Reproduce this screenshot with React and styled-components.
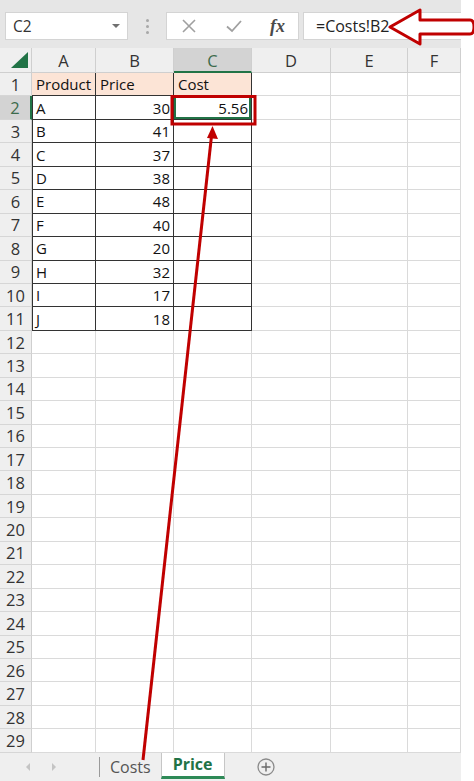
import React from "react";
import styled, { createGlobalStyle } from "styled-components";

const GlobalStyle = createGlobalStyle`
  html, body {
    margin: 0;
    padding: 0;
    background: #ffffff;
  }
  body {
    font-family: "Open Sans", "Noto Sans", sans-serif;
  }
`;

const COLS = [32, 64, 78, 78, 79, 77, 53];
const LETTERS = ["A", "B", "C", "D", "E", "F"];
const ROW_H = 23.45;

const products = ["A", "B", "C", "D", "E", "F", "G", "H", "I", "J"];
const prices = [30, 41, 37, 38, 48, 40, 20, 32, 17, 18];

const Page = styled.div`
  position: relative;
  width: 474px;
  height: 781px;
  overflow: hidden;
  background: #ffffff;
`;

const Sheet = styled.div`
  width: 461px;
  display: flex;
  flex-direction: column;
`;

const Toolbar = styled.div`
  height: 48px;
  background: #e6e6e6;
  display: flex;
  align-items: center;
  padding: 0 0 0 5px;
  box-sizing: border-box;
  padding-top: 4px;
`;

const NameBox = styled.div`
  width: 123px;
  height: 28px;
  background: #ffffff;
  box-sizing: border-box;
  border: 1px solid #d4d4d4;
  display: flex;
  align-items: center;
  justify-content: space-between;
  padding: 0 7px 0 7px;
  font-size: 15.5px;
  color: #333;
`;

const Caret = styled.span`
  width: 0;
  height: 0;
  border-left: 4px solid transparent;
  border-right: 4px solid transparent;
  border-top: 4px solid #707070;
`;

const Dots = styled.div`
  width: 38px;
  display: flex;
  flex-direction: column;
  align-items: center;
  gap: 3px;
  & span {
    width: 3px;
    height: 3px;
    background: #a8a8a8;
    border-radius: 50%;
  }
`;

const FxBox = styled.div`
  width: 133px;
  height: 28px;
  background: #ffffff;
  box-sizing: border-box;
  border: 1px solid #d4d4d4;
  display: flex;
  align-items: center;
  justify-content: space-between;
  padding: 0 13px 0 14px;
`;

const Fx = styled.span`
  font-family: "Liberation Serif", serif;
  font-style: italic;
  font-weight: 700;
  font-size: 18px;
  color: #4a4a4a;
`;

const FormulaBox = styled.div`
  flex: 1;
  margin-left: 4px;
  height: 28px;
  background: #ffffff;
  box-sizing: border-box;
  border: 1px solid #d4d4d4;
  border-right: none;
  display: flex;
  align-items: center;
  padding-left: 12px;
  font-size: 16px;
  color: #222;
`;

const Grid = styled.div`
  display: grid;
  grid-template-columns: ${COLS.map((c) => `${c}px`).join(" ")};
  grid-template-rows: 25px repeat(29, ${ROW_H}px);
`;

const Corner = styled.div`
  background: #efefef;
  border-right: 1px solid #cfcfcf;
  border-bottom: 1px solid #cfcfcf;
  box-sizing: border-box;
  display: flex;
  align-items: flex-end;
  justify-content: flex-end;
  padding: 0 3px 4px 0;
`;

const ColHead = styled.div`
  background: ${(p) => (p.$active ? "#d3d3d3" : "#efefef")};
  color: ${(p) => (p.$active ? "#3d6b4c" : "#333")};
  border-right: 1px solid #cfcfcf;
  border-bottom: ${(p) => (p.$active ? "2px solid #217346" : "1px solid #cfcfcf")};
  box-sizing: border-box;
  display: flex;
  align-items: center;
  justify-content: center;
  font-size: 16.5px;
  padding-top: 1px;
`;

const RowHead = styled.div`
  background: ${(p) => (p.$active ? "#d3d3d3" : "#efefef")};
  color: ${(p) => (p.$active ? "#3d6b4c" : "#333")};
  border-right: ${(p) => (p.$active ? "2px solid #217346" : "1px solid #cfcfcf")};
  border-bottom: 1px solid #d6d6d6;
  box-sizing: border-box;
  display: flex;
  align-items: center;
  justify-content: center;
  font-size: 16.5px;
`;

const Cell = styled.div`
  background: ${(p) => p.$fill || "#ffffff"};
  border-right: 1px solid ${(p) => (p.$dark ? "#333" : "#dadada")};
  border-bottom: 1px solid ${(p) => (p.$dark ? "#333" : "#dadada")};
  box-shadow: ${(p) =>
    p.$selected
      ? "inset 0 0 0 2px #217346"
      : p.$left
      ? "inset 1px 0 0 #333"
      : "none"};
  box-sizing: border-box;
  display: flex;
  align-items: center;
  justify-content: ${(p) => (p.$right ? "flex-end" : "flex-start")};
  padding: 0 3px 0 4px;
  font-size: 15px;
  color: #111;
  white-space: nowrap;
  overflow: hidden;
`;

const TabBar = styled.div`
  height: 28px;
  background: #efefef;
  display: flex;
  align-items: stretch;
`;

const NavArrows = styled.div`
  width: 100px;
  display: flex;
  align-items: center;
  justify-content: flex-start;
  gap: 22px;
  padding-left: 26px;
  box-sizing: border-box;
  border-right: 1px solid #9a9a9a;
  margin: 4px 0;
`;

const NavArrow = styled.span`
  width: 0;
  height: 0;
  border-top: 4px solid transparent;
  border-bottom: 4px solid transparent;
  ${(p) =>
    p.$dir === "left"
      ? "border-right: 4px solid #c4c4c4;"
      : "border-left: 4px solid #c4c4c4;"}
`;

const Tab = styled.div`
  padding: 0 ${(p) => (p.$active ? "11px" : "10px")};
  display: flex;
  align-items: center;
  font-size: 16px;
  box-sizing: border-box;
  background: ${(p) => (p.$active ? "#ffffff" : "transparent")};
  color: ${(p) => (p.$active ? "#217346" : "#555")};
  font-weight: ${(p) => (p.$active ? 700 : 400)};
  border-bottom: ${(p) => (p.$active ? "3px solid #2e8a57" : "none")};
  border-right: ${(p) => (p.$active ? "1px solid #c6c6c6" : "none")};
  border-left: ${(p) => (p.$active ? "1px solid #c6c6c6" : "none")};
  margin-bottom: ${(p) => (p.$active ? "2px" : "0")};
`;

const AddSheet = styled.div`
  margin-left: 32px;
  display: flex;
  align-items: center;
`;

const Overlay = styled.svg`
  position: absolute;
  left: 0;
  top: 0;
  pointer-events: none;
`;

export default function App() {
  const cells = [];
  for (let r = 1; r <= 29; r++) {
    cells.push(
      <RowHead key={`rh${r}`} $active={r === 2}>
        {r}
      </RowHead>
    );
    for (let c = 0; c < 6; c++) {
      const inTable = r <= 11 && c < 3;
      let text = "";
      let right = false;
      if (r === 1 && c < 3) text = ["Product", "Price", "Cost"][c];
      if (r >= 2 && r <= 11) {
        if (c === 0) text = products[r - 2];
        if (c === 1) {
          text = prices[r - 2];
          right = true;
        }
      }
      if (r === 2 && c === 2) {
        text = "5.56";
        right = true;
      }
      cells.push(
        <Cell
          key={`c${r}-${c}`}
          $dark={inTable}
          $left={inTable && c === 0 && r > 1}
          $fill={r === 1 && c < 3 ? "#fce4d6" : null}
          $right={right}
          $selected={r === 2 && c === 2}
        >
          {text}
        </Cell>
      );
    }
  }

  return (
    <Page>
      <GlobalStyle />
      <Sheet>
        <Toolbar>
          <NameBox>
            C2
            <Caret />
          </NameBox>
          <Dots>
            <span />
            <span />
            <span />
          </Dots>
          <FxBox>
            <svg width="16" height="16" viewBox="0 0 16 16">
              <path d="M2 2 L14 14 M14 2 L2 14" stroke="#a0a0a0" strokeWidth="1.6" fill="none" />
            </svg>
            <svg width="18" height="16" viewBox="0 0 18 16">
              <path d="M2 8.5 L7 13 L16 3" stroke="#a0a0a0" strokeWidth="1.8" fill="none" />
            </svg>
            <Fx>fx</Fx>
          </FxBox>
          <FormulaBox>=Costs!B2</FormulaBox>
        </Toolbar>

        <Grid>
          <Corner>
            <svg width="17" height="16" viewBox="0 0 17 16">
              <path d="M17 0 L17 16 L0 16 Z" fill="#217346" />
            </svg>
          </Corner>
          {LETTERS.map((l) => (
            <ColHead key={l} $active={l === "C"}>
              {l}
            </ColHead>
          ))}
          {cells}
        </Grid>

        <TabBar>
          <NavArrows>
            <NavArrow $dir="left" />
            <NavArrow $dir="right" />
          </NavArrows>
          <Tab>Costs</Tab>
          <Tab $active>Price</Tab>
          <AddSheet>
            <svg width="18" height="18" viewBox="0 0 18 18">
              <circle cx="9" cy="9" r="8" stroke="#8a8a8a" strokeWidth="1.3" fill="none" />
              <path d="M9 4.5 V13.5 M4.5 9 H13.5" stroke="#6a6a6a" strokeWidth="1.4" />
            </svg>
          </AddSheet>
        </TabBar>
      </Sheet>

      <Overlay width="474" height="781" viewBox="0 0 474 781">
        <rect x="172" y="96.5" width="83" height="27.5" fill="none" stroke="#c00000" strokeWidth="3" />
        <line x1="143" y1="760" x2="211.5" y2="136" stroke="#c00000" strokeWidth="3" />
        <path d="M212.5 126 L207 138 L218 139 Z" fill="#c00000" />
        <path
          d="M390 27 L420 10 L420 20 L470 20 Q474 20 474 27 Q474 34 470 34 L420 34 L420 44 Z"
          fill="#ffffff"
          stroke="#c00000"
          strokeWidth="3"
          strokeLinejoin="round"
        />
      </Overlay>
    </Page>
  );
}
